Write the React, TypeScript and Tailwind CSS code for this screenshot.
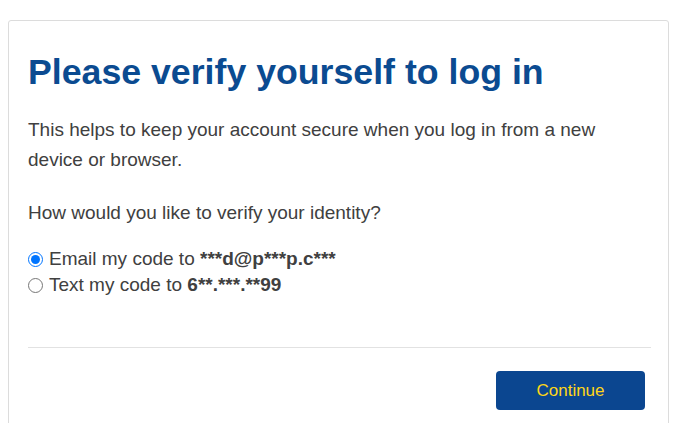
export default function App() {
  return (
    <div className="min-h-screen bg-white pt-5 pl-2 pr-[6px] font-['Liberation_Sans',Arial,sans-serif]">
      <div className="h-[420px] rounded-[3px] border border-[#dcdcdc] pl-[19px] pr-[17px] pt-[31px]">
        <h1 className="text-[35.7px] font-bold leading-[40px] text-[#0b4b91]">
          Please verify yourself to log in
        </h1>
        <p className="mt-[23px] text-[19px] leading-[30px] text-[#404040]">
          This helps to keep your account secure when you log in from a new
          <br />
          device or browser.
        </p>
        <p className="mt-[23px] text-[19px] leading-[30px] text-[#404040]">
          How would you like to verify your identity?
        </p>
        <div className="mt-[18px] text-[19px] text-[#404040]">
          <label className="flex h-[26px] items-center gap-[6px]">
            <input type="radio" name="m" defaultChecked className="m-0 h-[15px] w-[15px] accent-[#0075ff]" />
            <span>
              Email my code to <b>***d@p***p.c***</b>
            </span>
          </label>
          <label className="flex h-[26px] items-center gap-[6px]">
            <input type="radio" name="m" className="m-0 h-[15px] w-[15px]" />
            <span>
              Text my code to <b>6**.***.**99</b>
            </span>
          </label>
        </div>
        <div className="mt-[49px] border-t border-[#e2e2e2]" />
        <div className="mt-[23px] flex justify-end pr-[6px]">
          <button className="h-[39px] w-[149px] rounded-[4px] bg-[#0b4690] text-[17px] text-[#ffd617]">
            Continue
          </button>
        </div>
      </div>
    </div>
  );
}
